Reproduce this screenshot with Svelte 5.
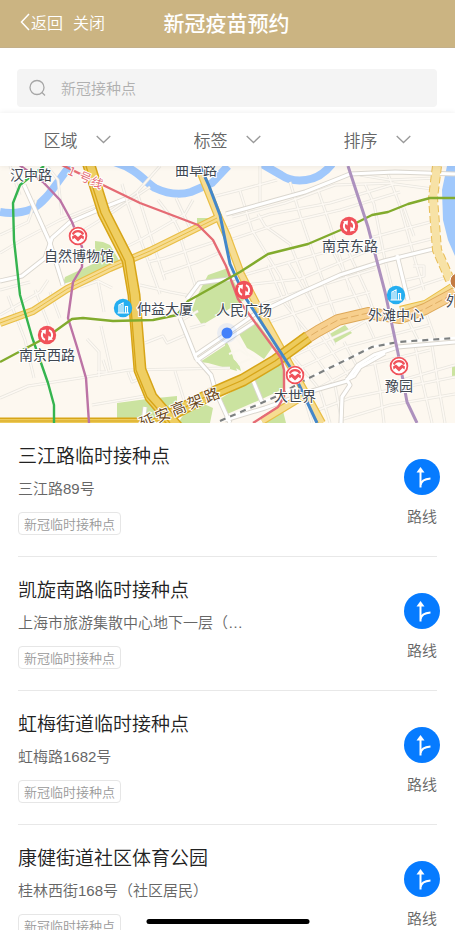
<script>
  let keyword = $state('');

  const filters = [
    { id: 'area', label: '区域' },
    { id: 'tag', label: '标签' },
    { id: 'sort', label: '排序' }
  ];

  const sites = [
    { name: '三江路临时接种点', address: '三江路89号', tag: '新冠临时接种点' },
    { name: '凯旋南路临时接种点', address: '上海市旅游集散中心地下一层（集散中心站）', tag: '新冠临时接种点' },
    { name: '虹梅街道临时接种点', address: '虹梅路1682号', tag: '新冠临时接种点' },
    { name: '康健街道社区体育公园', address: '桂林西街168号（社区居民）', tag: '新冠临时接种点' }
  ];

  const parks = [
    'M95 241L103 242 110 245 120 262 118 268 63 284 65 277 95 263z',
    'M197 218H213L197 225z',
    'M208 275L228 268 233 280 244 300 202 325 192 310 196 298z',
    'M200 362L226 345 231 350 237 371 208 363z',
    'M238 332L257 322 274 345 264 359 254 352 247 348z',
    'M225 340L231 348 230 357 239 363 241 371 225 362z',
    'M218 400L253 379 283 363V389L262 399 225 415z',
    'M184 414L204 404 213 408 210 423H178z',
    'M328 335L345 325 352 333 335 343z',
    'M117 403L147 399 177 396V408L160 423H117z',
    'M262 423L283 411 286 423z',
    'M452 367L455 366V377L452 376z'
  ];

  const water = [
    'M0 212Q16 215 32 209C48 200 56 183 70 166',
    'M114 162C138 169 145 182 155 188Q174 197 191 192L212 183 228 166',
    'M262 164L281 175Q291 182 306 180T332 164'
  ];

  const lanes = [
    'M0 253L22 240 60 220 95 206', 'M0 235L28 222 36 200', 'M47 166L58 180 62 215',
    'M84 230L110 214 150 187', 'M105 215L137 192 160 166', 'M120 250L140 240 185 214 193 200',
    'M137 192L152 240 165 280', 'M122 184L128 205 160 294', 'M158 200L175 222 184 240',
    'M176 198L190 228', 'M148 262L165 258 214 242', 'M180 236L195 285', 'M162 274L198 262 221 252',
    'M0 290L30 282', 'M80 287L98 281 112 288', 'M98 281L104 312', 'M140 285L170 292 191 296',
    'M10 166L20 195', 'M212 197L240 190 277 180', 'M260 166V205', 'M240 191L252 230 280 276 300 330',
    'M258 214L265 226 290 244 325 330', 'M290 182L300 215 312 250 335 315',
    'M318 190L330 225 350 290',
    'M232 217L285 203 335 185 394 183', 'M228 228L270 214 330 203 395 184 440 190',
    'M230 240L275 225 340 210 400 192', 'M365 184L374 204 385 260 395 300',
    'M388 174L400 206 415 260 424 290', 'M404 208L414 236', 'M370 238L434 221', 'M375 253L435 238',
    'M360 175L390 180 435 178', 'M244 275L290 262 355 244', 'M245 285L300 279 370 250',
    'M268 265L285 304 310 335', 'M288 262L310 300 335 345',
    'M330 246L350 285 364 315', 'M342 238L366 290 374 312', 'M255 306L305 290 375 269',
    'M260 325L320 305 370 292', 'M406 280L424 276V266H413', 'M404 291L447 277',
    'M0 315L40 292 48 280', 'M8 296L25 340 34 378', 'M35 290L49 325', 'M50 292L60 318',
    'M0 398L28 386 80 378 129 370 230 368', 'M87 339L99 352V377', 'M101 326L111 370', 'M97 372H107L103 360',
    'M145 343L163 336 167 343 188 334', 'M128 372L132 382 137 380', 'M92 405L145 396',
    'M175 371L184 400', 'M182 320L198 311', 'M190 328L205 324',
    'M272 345L300 383 312 423', 'M288 351L320 390 330 423', 'M306 343L335 385 342 423',
    'M320 334L350 378', 'M344 342L360 372', 'M365 318L374 338', 'M285 360L350 330 385 310',
    'M296 370L345 347 430 325', 'M306 395L355 368 430 350', 'M318 410L350 398 455 377',
    'M340 420L390 405 455 394', 'M373 355L380 390 384 423', 'M415 345L422 380 432 423',
    'M432 345L437 377 445 423', 'M395 382L455 365', 'M408 320L418 340', 'M425 310L435 338'
  ];

  const streets = [
    'M24 185L50 243 63 285', 'M0 281L22 276 45 258 52 238 70 222 98 210', 'M95 211L125 199',
    'M226 214L305 192 350 174 395 172 455 174', 'M258 313L300 293 340 275 384 261 437 248', 'M397 255L408 300',
    'M187 299L199 283 236 278', 'M180 318L196 358 211 375 216 392 230 423',
    'M196 361L227 340 256 321', 'M194 356L225 335 255 314',
    'M145 407L143 423', 'M252 378L262 402', 'M225 420L265 408 312 391 347 381',
    'M341 423L342 397 350 385 347 380 358 365 374 355 398 347 455 342', 'M346 380L354 376 360 367 385 353'
  ];

  const parkPaths = 'M228 341L236 360 247 374M236 338L248 354 259 361M229 354L240 350 248 356M238 364L250 359';

  const yellowRoads = [
    'M0 323L33 311 67 289 110 268 150 251 217 218',
    'M198 166L218 216 227 236 241 274 258 307 322 423',
    'M262 421L285 407 308 393'
  ];

  const railway = 'M220 421L275 397 305 380 352 357 372 347 398 342 412 341 455 338';
  const bund = 'M437 166L433 198 437 250 450 280';
  const eastRamp = 'M302 341L318 331 338 320 368 313 400 318 425 309 455 293';
  const elevated = 'M160 420L213 393 243 380 275 361 308 337';
  const northSouth = 'M88 162L104 213 128 260 134 295 140 370 151 397 177 427';

  const transfers = [[349, 226], [244, 290], [47, 335]];
  const stations = [[78, 236], [295, 375], [399, 366]];
  const buildings = [[123, 308], [396, 295]];

  const labels = [
    { x: 31, y: 180, text: '汉中路' },
    { x: 196, y: 175, text: '曲阜路' },
    { x: 79, y: 261, text: '自然博物馆' },
    { x: 350, y: 251, text: '南京东路' },
    { x: 165, y: 314, text: '仲益大厦' },
    { x: 244, y: 315, text: '人民广场' },
    { x: 396, y: 320, text: '外滩中心' },
    { x: 47, y: 360, text: '南京西路' },
    { x: 399, y: 391, text: '豫园' },
    { x: 295, y: 401, text: '大世界' },
    { x: 453, y: 306, text: '外' }
  ];
</script>

<div class="page">
  <header class="topbar">
    <nav class="nav">
      <button type="button" class="nav-btn">
        <svg width="10" height="18" viewBox="0 0 10 18" aria-hidden="true">
          <path d="M9 1L1.500 9 9 17" fill="none" stroke="#fff" stroke-width="1.500" />
        </svg>返回
      </button>
      <button type="button" class="nav-btn">关闭</button>
    </nav>
    <h1>新冠疫苗预约</h1>
  </header>

  <div class="search">
    <label class="search-box">
      <svg width="18" height="18" viewBox="0 0 18 18" aria-hidden="true">
        <g fill="none" stroke="#a6a6a6" stroke-width="1.300">
          <circle cx="8" cy="8.500" r="7" />
          <path d="M13 13.500L16 16.500" />
        </g>
      </svg>
      <input type="search" placeholder="新冠接种点" aria-label="新冠接种点" bind:value={keyword} />
    </label>
  </div>

  <div class="filters">
    {#each filters as filter}
      <label class="filter">
        <select id={filter.id} aria-label={filter.label}>
          <option>{filter.label}</option>
        </select>
        <svg width="15" height="9" viewBox="0 0 15 9" aria-hidden="true">
          <path d="M.7 1L7.500 7.500 14.300 1" fill="none" stroke="#999" stroke-width="1.300" />
        </svg>
      </label>
    {/each}
  </div>

  <!-- 地图 -->
  <svg class="map" viewBox="0 166 455 257" preserveAspectRatio="xMidYMid slice" role="img" aria-label="地图">
    <rect y="166" width="455" height="257" fill="#fdf8f0" />
    {#each parks as d}
      <path {d} fill="#cbe3a0" />
    {/each}
    <g fill="none" stroke="#a0c8fc" stroke-width="8">
      {#each water as d}
        <path {d} />
      {/each}
    </g>
    <path d="M447 166L442 190 443 220 448 240 455 256V166z" fill="#a0c8fc" />

    <g fill="none" stroke-linejoin="round">
      <g stroke="#e9e6df" stroke-width="3">
        {#each lanes as d}
          <path {d} />
        {/each}
      </g>
      <g stroke="#fdf9f3" stroke-width="1.500">
        {#each lanes as d}
          <path {d} />
        {/each}
      </g>
      <path d={parkPaths} stroke="#fbf7ee" stroke-width="2" />
      <g stroke="#dad6ce" stroke-width="5">
        {#each streets as d}
          <path {d} />
        {/each}
      </g>
      <g stroke="#fff" stroke-width="3.200">
        {#each streets as d}
          <path {d} />
        {/each}
      </g>

      <!-- 铁路 -->
      <path d={railway} stroke="#fff" stroke-width="2.500" />
      <path d={railway} stroke="#7d8080" stroke-width="2.200" stroke-dasharray="6 5" />

      <g stroke="#e9be45" stroke-width="8">
        {#each yellowRoads as d}
          <path {d} />
        {/each}
      </g>
      <g stroke="#f6dc92" stroke-width="5.600">
        {#each yellowRoads as d}
          <path {d} />
        {/each}
      </g>
      <path d={yellowRoads[0]} stroke="#e9be45" />

      <path d={bund} stroke="#e9be58" stroke-width="10" stroke-dasharray="7 3" />
      <path d={bund} stroke="#f7e2a6" stroke-width="8" />
      <path d="M400 309L425 303 455 284" stroke="#e9be45" stroke-width="6" />
      <path d="M400 309L425 303 455 284" stroke="#f6dc92" stroke-width="4" />

      <path d={eastRamp} stroke="#dda858" stroke-width="12" />
      <path d={eastRamp} stroke="#f7cf8d" stroke-width="10" />
      <path d={eastRamp} stroke="#e0ae64" stroke-dasharray="8 3" />

      <path d="M0 422H170" stroke="#d7a518" stroke-width="9" />
      <path d="M0 422H170" stroke="#edcb5c" stroke-width="6" />
      <path d="M0 421H170" stroke="#d7a518" />
      <path d={elevated} stroke="#d7a518" stroke-width="13" />
      <path d={elevated} stroke="#edcb5c" stroke-width="10" />
      <path d={elevated} stroke="#d7a518" stroke-width="1.300" />
      <path d={northSouth} stroke="#d7a518" stroke-width="13" />
      <path d={northSouth} stroke="#efce62" stroke-width="10" />
      <path d="M86 166L101 213 125 261 130 295 136 370 147 397 170 423" stroke="#d7a518" stroke-width="1.300" />

      <!-- 地铁线路 -->
      <g stroke-width="2.400">
        <path d="M44 166L20 185 13 203 14 240 20 295 32 337 48 383 54 405V423" stroke="#35b44f" />
        <path d="M18 164L43 182 60 200 72 222 82 247V267L73 282 68 318 77 347 86 378 89 423" stroke="#bc73a5" />
        <path d="M60 164L107 187 140 203 198 225 213 240 226 266 238 299 281 358 284 370V397L278 407 253 423" stroke="#e56b74" />
        <path d="M200 166L209 186 220 215 230 264 245 297 292 370 317 423" stroke="#4387ca" stroke-width="3" />
        <path d="M0 362L47 337 72 319 83 318 113 321 153 320 177 315 188 301 240 272 268 254 308 244 350 226 372 215 388 212 408 204 430 198H455" stroke="#82ab2d" />
        <path d="M348 166L368 227 385 292 398 353 407 402 417 423" stroke="#ad91be" stroke-width="3" />
      </g>
    </g>

    <!-- 定位点 -->
    <circle cx="227" cy="333" r="10" fill="#4387ff" opacity=".1" />
    <circle cx="227" cy="333" r="5.500" fill="#4381fa" />

    {#each transfers as [x, y]}
      <g transform="translate({x} {y})">
        <circle r="9.200" fill="#f0525a" />
        <path d="M-2 4.800A5.200 5.200 0 0 1 -3.500 -3.800M2 -4.800A5.200 5.200 0 0 1 3.500 3.800" fill="none" stroke="#fff" stroke-width="2" />
        <path d="M-6 -4.500L-1 -5.500 -1.500 -.5zM6 4.500L1 5.500 1.500 .5z" fill="#fff" />
      </g>
    {/each}
    {#each stations as [x, y]}
      <g transform="translate({x} {y})">
        <circle r="9.500" fill="#fff" />
        <circle r="8.400" fill="none" stroke="#f0525a" stroke-width="1.800" />
        <path d="M-5.200 -1.500A5.500 5 0 0 1 5.200 -1.500" fill="none" stroke="#f0525a" stroke-width="2.200" />
        <path d="M-6 .5L-3 -1.500 0 1 3 -1.500 6 .5 5.500 3.500 3.500 2 0 5.500 -3.500 2 -5.500 3.500z" fill="#f0525a" />
      </g>
    {/each}
    {#each buildings as [x, y]}
      <g transform="translate({x} {y})">
        <circle r="9.200" fill="#25aef0" />
        <path d="M-4 5V-3L0 -5V5M-2 -3V5M2.500 5V-1.500H4.500V5M-5.500 5H6" fill="none" stroke="#fff" stroke-width="1.200" />
      </g>
    {/each}
    <circle cx="458" cy="281" r="8" fill="#c37b42" stroke="#fff" />

    <g class="map-text">
      {#each labels as label}
        <text x={label.x} y={label.y}>{label.text}</text>
      {/each}
      <text class="line-name" transform="translate(67 174) rotate(24)" x="0 12 25">1号线</text>
      <text class="road-name" transform="translate(142 429) rotate(-22)" x="0 17 34 52 70">延安高架路</text>
    </g>
  </svg>

  <ul class="sites">
    {#each sites as site}
      <li class="site">
        <div class="info">
          <h2>{site.name}</h2>
          <p>{site.address}</p>
          <span class="tag">{site.tag}</span>
        </div>
        <button type="button" class="route">
          <svg width="36" height="36" viewBox="0 0 36 36" aria-hidden="true">
            <circle cx="18" cy="18" r="18" fill="#067bff" />
            <path d="M16.500 28.500V13M16.500 26.500C17 22 20 20 26.500 19.500" fill="none" stroke="#fff" stroke-width="2" />
            <path d="M16.500 8L12.500 13.500H20.500z" fill="#fff" />
          </svg>
          路线
        </button>
      </li>
    {/each}
  </ul>

  <div class="home-bar"></div>
</div>

<style>
  :global(body) {
    margin: 0;
    background: #fff;
  }

  .page {
    display: flex;
    flex-direction: column;
    height: 100vh;
    overflow: hidden;
    font-family: 'Noto Sans CJK SC', sans-serif;
    font-weight: 350;
    color: #666;
  }

  button,
  input,
  select {
    padding: 0;
    border: none;
    background: none;
    font: inherit;
    color: inherit;
  }

  button {
    cursor: pointer;
  }

  .topbar {
    display: grid;
    grid-template-columns: 1fr auto 1fr;
    align-items: center;
    box-sizing: border-box;
    height: 48px;
    padding: 0 22px 4px 20px;
    border-bottom: 1px solid #c4b08a;
    background: #cbb482;
    color: #fff;
  }

  .nav {
    display: flex;
    gap: 10px;
  }

  .nav-btn {
    display: flex;
    align-items: center;
    gap: 1px;
    font-size: 16px;
    line-height: 24px;
  }

  h1 {
    margin: 0;
    font-size: 21px;
    line-height: 40px;
    font-weight: 500;
  }

  .search {
    padding: 21px 18px 6px 17px;
  }

  .search-box {
    display: flex;
    align-items: center;
    gap: 14px;
    height: 38px;
    padding: 0 12px;
    border-radius: 4px;
    background: #f4f4f4;
  }

  .search input {
    flex: 1;
    min-width: 0;
    outline: none;
    font-size: 15px;
    line-height: 24px;
  }

  .search input::placeholder {
    color: #b0b0b0;
  }

  .filters {
    position: relative;
    display: flex;
    height: 53px;
    padding: 0 3px 0 2px;
    background: #fff;
    box-shadow: 0 0 6px rgba(0, 0, 0, 0.08);
  }

  .filter {
    flex: 1;
    display: flex;
    align-items: center;
    justify-content: center;
    gap: 18px;
  }

  .filter select {
    appearance: none;
    font-size: 17px;
    line-height: 26px;
  }

  .map {
    display: block;
    flex: none;
    width: 100%;
    height: 257px;
  }

  .map-text text {
    font-size: 14px;
    font-weight: 400;
    text-anchor: middle;
    fill: #3e4650;
    stroke: #fff;
    stroke-width: 2px;
    paint-order: stroke;
  }

  .map-text .line-name {
    font-size: 12px;
    text-anchor: start;
    fill: #e56b74;
  }

  .map-text .road-name {
    font-size: 15px;
    text-anchor: start;
    fill: #6d4a20;
  }

  .sites {
    flex: 1;
    min-height: 0;
    margin: 0;
    padding: 0 18px;
    overflow-y: auto;
    scrollbar-width: none;
    list-style: none;
  }

  .site {
    display: flex;
    justify-content: space-between;
    box-sizing: border-box;
    height: 134px;
    padding-top: 18px;
    border-bottom: 1px solid #e8e8e8;
  }

  .info {
    width: 236px;
  }

  h2 {
    margin: 0;
    font-size: 19px;
    line-height: 28px;
    font-weight: 350;
    color: #222;
    white-space: nowrap;
  }

  p {
    margin: 8px 0 11px;
    overflow: hidden;
    font-family: 'Liberation Sans', 'Noto Sans CJK SC', sans-serif;
    font-size: 15px;
    line-height: 24px;
    text-overflow: ellipsis;
    white-space: nowrap;
  }

  .tag {
    display: block;
    width: fit-content;
    padding: 0 5px;
    border: 1px solid #e6e6e6;
    border-radius: 4px;
    font-size: 13px;
    line-height: 21px;
    color: #999;
  }

  .route {
    display: flex;
    flex-direction: column;
    align-items: center;
    gap: 9px;
    align-self: flex-start;
    margin: 18px -3px 0 0;
    font-size: 15px;
    line-height: 24px;
  }

  .home-bar {
    position: fixed;
    bottom: 6px;
    left: 50%;
    width: 163px;
    height: 5px;
    border-radius: 3px;
    background: #000;
    transform: translateX(-50%);
  }
</style>
